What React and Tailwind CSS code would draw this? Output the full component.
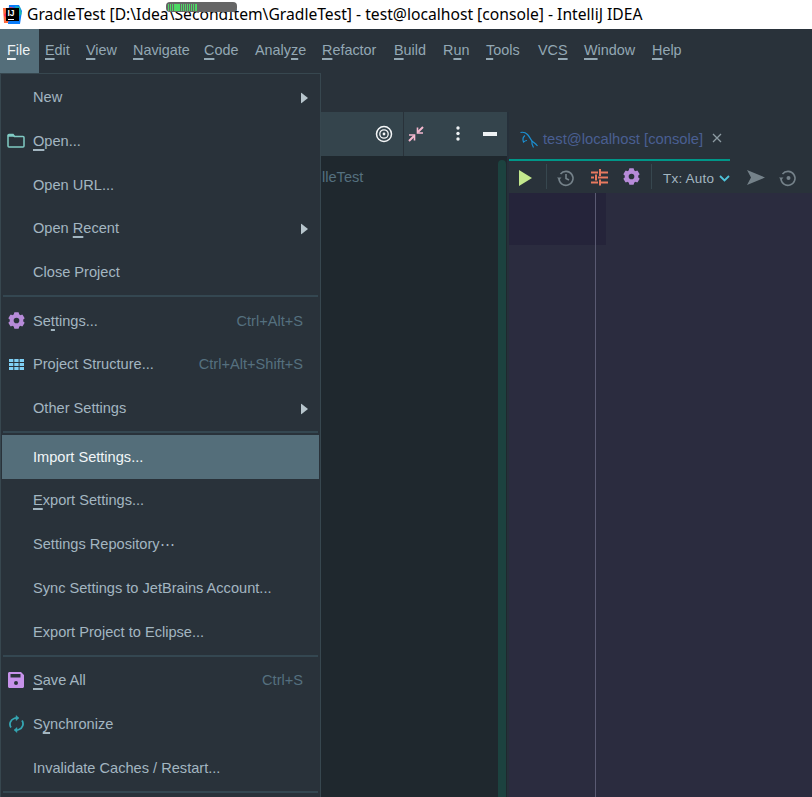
import React from "react";

const F = { fontFamily: '"Liberation Sans", Arial, sans-serif' };

function Mn({ t, i }) {
  return (
    <>
      {t.slice(0, i)}
      <span className="underline decoration-[1.5px] underline-offset-[3px] [text-decoration-skip-ink:none]">{t[i]}</span>
      {t.slice(i + 1)}
    </>
  );
}

const Gear = ({ size = 17, color = "#b78bd9" }) => (
  <svg width={size} height={size} viewBox="0 0 24 24" fill={color}>
    <circle cx="12" cy="12" r="6.800" fill="none" stroke={color} strokeWidth="5.600" />
    {[0, 60, 120, 180, 240, 300].map((a) => (
      <rect key={a} x="8.500" y="0.500" width="7" height="5" rx="1.200" transform={`rotate(${a} 12 12)`} />
    ))}
  </svg>
);

const Arrow = () => (
  <svg width="7" height="11" viewBox="0 0 7 11" className="absolute right-[11px] top-1/2 -translate-y-1/2 mt-[0.500px]">
    <path d="M0 0l7 5.500L0 11z" fill="#b7c5cc" />
  </svg>
);

const FolderIcon = () => (
  <svg width="18" height="15" viewBox="0 0 18 15" fill="none" stroke="#80cbc4" strokeWidth="1.500">
    <path d="M1 2.500c0-.6.400-1 1-1h4l1.500 2h8.500c.6 0 1 .4 1 1V13c0 .6-.400 1-1 1H2c-.6 0-1-.4-1-1z" />
    <path d="M1 2h6v1.500H1z" fill="#80cbc4" strokeWidth="0.500" />
  </svg>
);

const GridIcon = () => (
  <svg width="15" height="11" viewBox="0 0 15 11" fill="#7fd0f5">
    <rect x="0" y="0" width="4.300" height="3" /><rect x="5.300" y="0" width="4.300" height="3" /><rect x="10.600" y="0" width="4.400" height="3" />
    <rect x="0" y="4" width="4.300" height="3" /><rect x="5.300" y="4" width="4.300" height="3" /><rect x="10.600" y="4" width="4.400" height="3" />
    <rect x="0" y="8" width="4.300" height="3" /><rect x="5.300" y="8" width="4.300" height="3" /><rect x="10.600" y="8" width="4.400" height="3" />
  </svg>
);

const SaveIcon = () => (
  <svg width="16" height="16" viewBox="0 0 16 16">
    <path fillRule="evenodd" fill="#c792ea" d="M1.500 0H13L16 3v11.500c0 .8-.7 1.500-1.500 1.500h-13C.7 16 0 15.300 0 14.500v-13C0 .7.7 0 1.500 0zM2.500 2v3.500h10V2zm5.500 7a2 2 0 100 4 2 2 0 000-4z" />
  </svg>
);

const SyncIcon = () => (
  <svg width="15" height="18" viewBox="0 0 15 18" fill="none" stroke="#35a6b3" strokeWidth="1.800">
    <path d="M2 12.500A6 6 0 015 3.500c.9-.4 1.700-.6 2.500-.6" />
    <path d="M13 5.500A6 6 0 0110 14.500c-.9.4-1.700.6-2.500.6" />
    <path d="M7 0.500L10 3 7 5.500z" fill="#35a6b3" strokeWidth="0.500" />
    <path d="M8 12.500L5 15l3 2.500z" fill="#35a6b3" strokeWidth="0.500" />
  </svg>
);

function Item({ icon, children, shortcut, arrow, active }) {
  return (
    <div className={"relative flex items-center h-[43.7px] pt-[2px] pl-[31px] pr-[16px] mx-[1px] text-[14.600px] " + (active ? "bg-[#546e7a] text-[#f2f6f8]" : "text-[#a3b6c1]")}>
      {icon && <span className="absolute left-[5px] top-0 bottom-0 w-[18px] flex items-center justify-center">{icon}</span>}
      <span className="flex-1 whitespace-nowrap">{children}</span>
      {shortcut && <span className="text-[#55707f] whitespace-nowrap">{shortcut}</span>}
      {arrow && <Arrow />}
    </div>
  );
}

const Sep = () => (
  <div className="h-[5px] mx-[2px] flex flex-col justify-center">
    <div className="h-[2px] bg-[#344751]" />
  </div>
);

const menus = [
  ["File", 0, "w-[39px] pl-[7px] bg-[#546e7a] text-[#eef2f4]"],
  ["Edit", 0, "w-[41px] pl-[6px]"],
  ["View", 0, "w-[47px] pl-[6px]"],
  ["Navigate", 0, "w-[71px] pl-[6px]"],
  ["Code", 0, "w-[51px] pl-[6px]"],
  ["Analyze", 5, "w-[67px] pl-[6px]"],
  ["Refactor", 0, "w-[72px] pl-[6px]"],
  ["Build", 0, "w-[49px] pl-[6px]"],
  ["Run", 1, "w-[43px] pl-[6px]"],
  ["Tools", 0, "w-[52px] pl-[6px]"],
  ["VCS", 2, "w-[46px] pl-[6px]"],
  ["Window", 0, "w-[68px] pl-[6px]"],
  ["Help", 0, "w-[40px] pl-[6px]"],
];

export default function App() {
  return (
    <div className="relative w-[812px] h-[797px] overflow-hidden bg-[#29323a]" style={F}>
      {/* Title bar */}
      <div className="relative h-[29px] bg-white flex items-center text-black">
        <div className="relative ml-[3px] w-[19px] h-[19px] shrink-0">
          <svg width="19" height="19" viewBox="0 0 19 19" className="absolute inset-0">
            <path d="M0 3h8l-3 15H1z" fill="#fe6a3c" />
            <path d="M6 0h10l3 6-2 13H5z" fill="#087cfa" />
            <path d="M1 10l6-8 5 1-6 14z" fill="#fe2857" />
            <path d="M12 1l5 1 2 7-4 3z" fill="#21d789" opacity="0.600" />
          </svg>
          <div className="absolute left-[3px] top-[3px] w-[13px] h-[13px] bg-black" />
          <span className="absolute left-[4.500px] top-[3.500px] text-[8.500px] leading-[9px] font-bold text-white">IJ</span>
          <div className="absolute left-[5px] top-[13.500px] w-[6px] h-[1px] bg-white" />
        </div>
        <span className="ml-[5px] text-[15.660px] whitespace-nowrap" style={{ fontFamily: '"Noto Sans", "Open Sans", sans-serif' }}>
          GradleTest [D:\Idea\SecondItem\GradleTest] - test@localhost [console] - IntelliJ IDEA
        </span>
        <div className="absolute left-[166px] top-[2px] w-[71px] h-[10px] rounded-[4px] bg-[#666666] flex items-center pl-[2px] gap-[0.800px]">
          {Array.from({ length: 14 }).map((_, k) => (
            <div key={k} className="w-[1.300px] h-[7px] bg-[#4cd964]" />
          ))}
        </div>
      </div>

      {/* Menu bar */}
      <div className="flex h-[44px] text-[14.400px] text-[#93a8b4] bg-[#29323a]">
        {menus.map(([m, i, cls]) => (
          <div key={m} className={"flex items-center shrink-0 whitespace-nowrap " + cls}>
            <span><Mn t={m} i={i} /></span>
          </div>
        ))}
      </div>

      {/* Secondary toolbar */}
      <div className="h-[39px] bg-[#29323a]" />

      {/* Main row */}
      <div className="flex h-[685px]">
        {/* Project tool window */}
        <div className="w-[509px] shrink-0 flex flex-col border-r-2 border-[#26303a]">
          <div className="h-[44px] bg-[#34444c] relative shrink-0">
            <svg width="18" height="18" viewBox="0 0 18 18" fill="none" stroke="#f5f7f8" className="absolute left-[375px] top-[13px]">
              <circle cx="9" cy="9" r="7.500" strokeWidth="1.500" /><circle cx="9" cy="9" r="4.200" strokeWidth="1.300" /><circle cx="9" cy="9" r="1.400" fill="#f5f7f8" strokeWidth="0" />
            </svg>
            <div className="absolute left-[403px] top-0 bottom-0 w-[1px] bg-[#29323a]" />
            <svg width="16" height="16" viewBox="0 0 16 16" className="absolute left-[408px] top-[14px]" fill="none" stroke="#f4b8cf" strokeWidth="2">
              <path d="M15 1L10 6M1 15l5-5" />
              <path d="M9.500 1.500v5.500H15M6.500 14.500V9H1" strokeWidth="1.600" />
            </svg>
            <svg width="4" height="15" viewBox="0 0 4 15" className="absolute left-[456px] top-[14px]" fill="#eef2f4">
              <circle cx="2" cy="2" r="1.700" /><circle cx="2" cy="7.500" r="1.700" /><circle cx="2" cy="13" r="1.700" />
            </svg>
            <div className="absolute left-[483px] top-[20px] w-[14px] h-[4px] bg-[#eef2f4]" />
          </div>
          <div className="flex-1 bg-[#1f282e] relative">
            <span className="absolute left-[322px] top-[12px] text-[14.600px] leading-[18px] text-[#55707f] whitespace-nowrap">lleTest</span>
            <div className="absolute left-[498px] top-[4px] bottom-0 w-[8px] rounded-t-[4px] bg-[#1c423f]" />
          </div>
        </div>

        {/* Console */}
        <div className="flex-1 flex flex-col min-w-0">
          <div className="h-[49px] relative shrink-0 bg-[#29323a]">
            <div className="absolute left-0 bottom-0 w-[221px] h-[46px] flex items-center border-b-2 border-[#009688] pl-[11px] pt-[4px]">
              <svg width="19" height="17" viewBox="0 0 19 17" fill="none" stroke="#1b8fd1" strokeWidth="1.200">
                <path d="M0.500 1.500c2.500-.6 5 0 7 2 2 2 2.800 4.500 4.500 6.500 1.500 1.500 3.500 2.500 5.500 5" />
                <path d="M5 4.500c-2 1.500-2.500 4-1.500 6.500 1.200-1 2.500-1.500 3.500-1.500M12 10c-.5 2 0 4 1.500 6.500" />
              </svg>
              <span className="ml-[4px] text-[14.750px] text-[#4a5f92] whitespace-nowrap">test@localhost [console]</span>
              <svg width="10" height="10" viewBox="0 0 10 10" className="ml-[8.500px] -mt-[3px]" stroke="#8d9ba3" strokeWidth="1.300">
                <path d="M1 1l8 8M9 1l-8 8" />
              </svg>
            </div>
          </div>
          <div className="h-[32px] relative shrink-0 bg-[#29323a]">
            <svg width="13" height="16" viewBox="0 0 13 16" className="absolute left-[10px] top-[9px]"><path d="M0 0l13 8-13 8z" fill="#c3e88d" /></svg>
            <div className="absolute left-[37px] top-[3px] h-[25px] w-[1px] bg-[#37474f]" />
            <svg width="18" height="18" viewBox="0 0 18 18" className="absolute left-[48px] top-[8px]" fill="none" stroke="#75828a" strokeWidth="1.600">
              <path d="M3.500 5A7 7 0 112 9" /><path d="M9 5v4.500l3 1.500" /><path d="M0 8.500h4.500L2.200 11z" fill="#75828a" stroke="none" />
            </svg>
            <svg width="17" height="17" viewBox="0 0 17 17" className="absolute left-[82px] top-[8px]" fill="#e8795f">
              <rect x="0" y="2.500" width="7" height="2" /><rect x="10" y="2.500" width="7" height="2" /><rect x="8" y="0" width="2" height="7" />
              <rect x="0" y="7.500" width="3" height="2" /><rect x="7" y="7.500" width="10" height="2" /><rect x="4" y="5.500" width="2" height="6" />
              <rect x="0" y="12.500" width="7" height="2" /><rect x="10" y="12.500" width="7" height="2" /><rect x="8" y="10.500" width="2" height="6" />
            </svg>
            <div className="absolute left-[113.500px] top-[7px]"><Gear size={17} /></div>
            <div className="absolute left-[142px] top-[3px] h-[25px] w-[1px] bg-[#37474f]" />
            <span className="absolute left-[154px] top-[8px] text-[13.500px] text-[#a3b6c1] whitespace-nowrap tracking-[0.200px]">Tx: Auto</span>
            <svg width="11" height="7" viewBox="0 0 11 7" className="absolute left-[210px] top-[14px]" fill="none" stroke="#4fc3d9" strokeWidth="1.800"><path d="M1 1l4.500 4.500L10 1" /></svg>
            <svg width="18" height="15" viewBox="0 0 18 15" className="absolute left-[238px] top-[9px]" fill="#75828a"><path d="M0 0l18 7.500L0 15l4-7.500z" /></svg>
            <svg width="18" height="18" viewBox="0 0 18 18" className="absolute left-[270px] top-[8px]" fill="none" stroke="#75828a" strokeWidth="1.600">
              <path d="M3.500 5A7 7 0 112 9" /><circle cx="9.500" cy="9" r="2" fill="#75828a" stroke="none" /><path d="M0 8.500h4.500L2.200 11z" fill="#75828a" stroke="none" />
            </svg>
          </div>
          <div className="flex-1 bg-[#2b2c3f] relative">
            <div className="h-[52px] w-[97px] bg-[#25243a]" />
            <div className="absolute left-[86px] top-0 bottom-0 w-[1px] bg-[#5a5a72]" />
          </div>
        </div>
      </div>

      {/* File menu */}
      <div className="absolute left-0 top-[73px] w-[321px] h-[724px] bg-[#29323a] border-t border-r border-l border-[#37474f] pt-[1.400px]">
        <Item arrow>New</Item>
        <Item icon={<FolderIcon />}><Mn t="Open..." i={0} /></Item>
        <Item>Open URL...</Item>
        <Item arrow>Open <Mn t="Recent" i={0} /></Item>
        <Item>Close Project</Item>
        <Sep />
        <Item icon={<Gear size={17} />} shortcut="Ctrl+Alt+S"><Mn t="Settings..." i={2} /></Item>
        <Item icon={<GridIcon />} shortcut="Ctrl+Alt+Shift+S">Project Structure...</Item>
        <Item arrow>Other Settings</Item>
        <Sep />
        <Item active>Import Settings...</Item>
        <Item><Mn t="Export Settings..." i={0} /></Item>
        <Item>Settings Repository⋯</Item>
        <Item>Sync Settings to JetBrains Account...</Item>
        <Item>Export Project to Eclipse...</Item>
        <Sep />
        <Item icon={<SaveIcon />} shortcut="Ctrl+S"><Mn t="Save All" i={0} /></Item>
        <Item icon={<SyncIcon />}><Mn t="Synchronize" i={1} /></Item>
        <Item>Invalidate Caches / Restart...</Item>
        <Sep />
      </div>
    </div>
  );
}
